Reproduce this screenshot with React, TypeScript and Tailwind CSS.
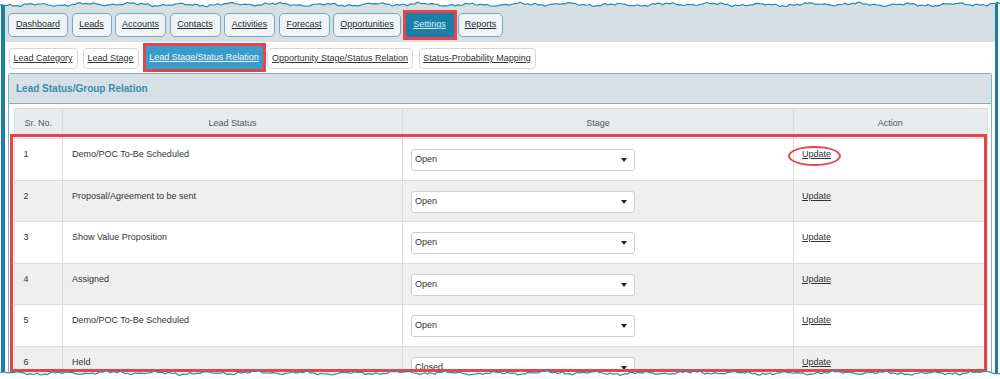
import React from 'react'

const navItems = [
    { label: 'Dashboard', w: 'w-[60px]' },
    { label: 'Leads', w: 'w-[40px]' },
    { label: 'Accounts', w: 'w-[51px]' },
    { label: 'Contacts', w: 'w-[51px]' },
    { label: 'Activities', w: 'w-[51px]' },
    { label: 'Forecast', w: 'w-[51px]' },
    { label: 'Opportunities', w: 'w-[68px]' },
    { label: 'Settings', w: 'w-[48px]', active: true },
    { label: 'Reports', w: 'w-[45px]' },
]

const rows = [
    { no: 1, status: 'Demo/POC To-Be Scheduled', stage: 'Open' },
    { no: 2, status: 'Proposal/Agreement to be sent', stage: 'Open' },
    { no: 3, status: 'Show Value Proposition', stage: 'Open' },
    { no: 4, status: 'Assigned', stage: 'Open' },
    { no: 5, status: 'Demo/POC To-Be Scheduled', stage: 'Open' },
    { no: 6, status: 'Held', stage: 'Closed' },
]

// torn paper edge of the screenshot
function wavePoints(base: number, amp: number, seed: number) {
    const pts: string[] = []
    for (let x = 0; x <= 1000; x += 2.5) {
        const n =
            Math.sin(x * 0.13 + seed) +
            0.6 * Math.sin(x * 0.37 + 1 + seed) +
            0.5 * Math.sin(x * 0.91 + 2) +
            0.4 * Math.sin(x * 0.043 + seed * 2) +
            0.3 * Math.sin(x * 1.7 + seed)
        pts.push(`${x},${(base + (amp * n) / 2).toFixed(2)}`)
    }
    return pts
}

function TornTop() {
    const pts = wavePoints(4.5, 2, 0)
    return (
        <svg className="absolute left-0 top-0" width="1000" height="10" viewBox="0 0 1000 10">
            <path d={`M0,0 L${pts.join(' L')} L1000,0 Z`} fill="#ffffff" />
            <polyline points={pts.join(' ')} fill="none" stroke="#2a8cb2" strokeWidth="1.2" />
        </svg>
    )
}

function TornBottom() {
    const pts = wavePoints(5, 2, 3)
    return (
        <svg className="absolute left-0 bottom-0" width="1000" height="11" viewBox="0 0 1000 11">
            <path d={`M0,11 L${pts.join(' L')} L1000,11 Z`} fill="#ffffff" />
            <polyline points={pts.join(' ')} fill="none" stroke="#2a8cb2" strokeWidth="1.2" />
        </svg>
    )
}

function StageSelect({ value }: { value: string }) {
    return (
        <div className="flex h-[22px] w-[224px] items-center justify-between rounded-[3px] border border-[#cfcfcf] bg-white pl-[3px] pr-[7px] text-[9px] text-[#333]">
            <span>{value}</span>
            <svg width="6" height="4" viewBox="0 0 6 4">
                <path d="M0 0 L6 0 L3 4 Z" fill="#222" />
            </svg>
        </div>
    )
}

export default function App() {
    return (
        <div className="relative h-[379px] w-[1000px] overflow-hidden bg-white font-['Liberation_Sans',Arial,sans-serif]">
            <div className="flex h-full">
                <div className="w-[1px] shrink-0 bg-white" />
                <div className="w-[4px] shrink-0 bg-[#1b7ea2]" />

                <div className="flex w-[990px] shrink-0 flex-col overflow-hidden">
                    {/* Top menu */}
                    <div className="flex h-[42px] shrink-0 items-center gap-[3.5px] bg-[#d5dfe4] pl-[3px] pt-[8px]">
                        {navItems.map((it) => (
                            <div
                                key={it.label}
                                className={
                                    it.active
                                        ? `${it.w} mx-[1px] flex h-[24px] items-center justify-center bg-[#1b80a7] text-[9px] text-[#d7ecf6] underline outline-[3px] outline-[#e8434b]`
                                        : `${it.w} flex h-[24px] items-center justify-center rounded-[5px] border border-[#77a9bb] bg-[#eef3f5] text-[9px] text-[#2b2b2b] underline`
                                }
                            >
                                {it.label}
                            </div>
                        ))}
                    </div>

                    {/* Settings sub tabs */}
                    <div className="flex h-[31px] shrink-0 items-start bg-white pl-[3.5px] pt-[6px]">
                        <div className="flex h-[21px] w-[69px] items-center justify-center rounded-[4px] border border-[#d6d6d6] text-[9px] text-[#333] underline">Lead Category</div>
                        <div className="ml-[5px] flex h-[21px] w-[56px] items-center justify-center rounded-[4px] border border-[#d6d6d6] text-[9px] text-[#333] underline">Lead Stage</div>
                        <div className="ml-[7px] -mt-[2px] flex h-[23px] w-[117px] items-center justify-center bg-[#3a9cc8] text-[9px] text-[#eaf6fb] underline outline-[3px] outline-[#e8434b]">Lead Stage/Status Relation</div>
                        <div className="ml-[4.5px] flex h-[21px] w-[146px] items-center justify-center rounded-[4px] border border-[#d6d6d6] text-[9px] text-[#333] underline">Opportunity Stage/Status Relation</div>
                        <div className="ml-[5.5px] flex h-[21px] w-[117px] items-center justify-center rounded-[4px] border border-[#d6d6d6] text-[9px] text-[#333] underline">Status-Probability Mapping</div>
                    </div>

                    {/* Panel */}
                    <div className="ml-[3px] w-[984px] shrink-0 rounded-t-[3px] border border-b-0 border-[#7fb1c3]">
                        <div className="flex h-[30px] items-center border-b border-[#7fb1c3] bg-[#d6e0e5] pl-[7px] text-[10px] font-bold text-[#3a8db3]">
                            Lead Status/Group Relation
                        </div>
                        <div className="px-[4.5px] pt-[4px]">
                            <table className="w-[973px] table-fixed border-collapse text-[9px] text-[#333]">
                                <colgroup>
                                    <col className="w-[48.5px]" />
                                    <col className="w-[340px]" />
                                    <col className="w-[391px]" />
                                    <col className="w-[193.5px]" />
                                </colgroup>
                                <thead>
                                    <tr className="h-[30px] bg-[#e9ecef] text-[#555]">
                                        <th className="border border-[#dadde0] font-normal">Sr. No.</th>
                                        <th className="border border-[#dadde0] font-normal">Lead Status</th>
                                        <th className="border border-[#dadde0] font-normal">Stage</th>
                                        <th className="border border-[#dadde0] font-normal">Action</th>
                                    </tr>
                                </thead>
                                <tbody>
                                    {rows.map((r, i) => (
                                        <tr key={r.no} className={i % 2 === 0 ? 'h-[41.5px] bg-white' : 'h-[41.5px] bg-[#efefef]'}>
                                            <td className="border border-[#dcdcdc] px-[9px] pt-[9px] align-top">{r.no}</td>
                                            <td className="border border-[#dcdcdc] px-[9px] pt-[9px] align-top">{r.status}</td>
                                            <td className="border border-[#dcdcdc] px-[8px] pt-[10px] align-top">
                                                <StageSelect value={r.stage} />
                                            </td>
                                            <td className="border border-[#dcdcdc] px-[8px] pt-[9px] align-top">
                                                <span className="underline">Update</span>
                                            </td>
                                        </tr>
                                    ))}
                                </tbody>
                            </table>
                        </div>
                    </div>
                </div>

                <div className="w-[3px] shrink-0 bg-[#1b7ea2]" />
                <div className="w-[2px] shrink-0 bg-white" />
            </div>

            {/* annotation marks */}
            <div className="absolute left-[10px] top-[134px] h-[238px] w-[977px] border-[3.5px] border-[#e8434b]" />
            <div className="absolute left-[788px] top-[146px] h-[20px] w-[53px] rounded-[50%] border-[2.5px] border-[#e8434b]" />

            <TornTop />
            <TornBottom />
        </div>
    )
}
